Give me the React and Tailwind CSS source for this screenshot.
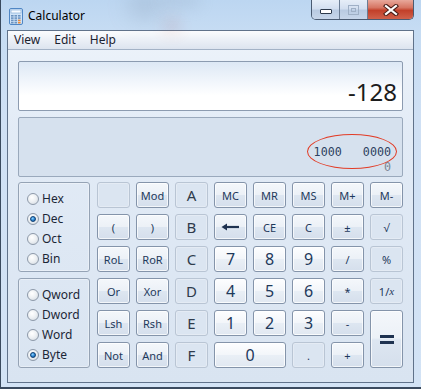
import React from "react";

const TXT = "text-[#1e395b]";

function Btn({ children, v = "op", className = "" }) {
  const base =
    "flex items-center justify-center rounded-[3px] border leading-none select-none " + TXT + " ";
  const styles = {
    op: "border-[#8494aa] bg-[linear-gradient(to_bottom,#f4f7fb_0%,#ecf1f7_48%,#dde6f1_52%,#d5dfec_100%)] shadow-[inset_0_0_0_1px_rgba(255,255,255,0.7)]",
    num: "border-[#8494aa] bg-[linear-gradient(to_bottom,#fdfeff_0%,#f3f6fa_48%,#e9eff6_52%,#e1e8f1_100%)] shadow-[inset_0_0_0_1px_rgba(255,255,255,0.8)]",
    dis: "border-[#b9c5d4] bg-[#dbe5f1] shadow-[inset_0_0_0_1px_rgba(255,255,255,0.25)]",
  };
  return <div className={base + styles[v] + " " + className}>{children}</div>;
}

function Radio({ label, checked }) {
  return (
    <div className="flex h-[20px] items-center">
      <div className="relative flex h-[12px] w-[12px] items-center justify-center rounded-full border border-[#8d99a9] bg-[radial-gradient(circle_at_40%_35%,#ffffff_0%,#eef1f4_45%,#cfd6de_100%)]">
        {checked && (
          <div className="h-[6px] w-[6px] rounded-full border border-[#0f3f73] bg-[radial-gradient(circle_at_40%_35%,#8fd3ff_0%,#2d8ad8_50%,#0f4f8f_100%)]" />
        )}
      </div>
      <span className="ml-[3px] text-[12px] leading-none text-[#1b2636]">{label}</span>
    </div>
  );
}

function Group({ items, checked }) {
  return (
    <div className="flex h-[90px] flex-col rounded-[3px] border border-[#95a3b5] pl-[8px] pt-[6px] shadow-[inset_0_0_0_1px_rgba(255,255,255,0.35)]">
      {items.map((it) => (
        <Radio key={it} label={it} checked={it === checked} />
      ))}
    </div>
  );
}

function CalcIcon() {
  return (
    <svg width="14" height="17" viewBox="0 0 14 17">
      <rect x="0.5" y="0.5" width="13" height="16" rx="1.5" fill="#cfe3f7" stroke="#4f86c4" />
      <rect x="2" y="2" width="10" height="3" fill="#f7fbff" stroke="#7aa3cf" strokeWidth="0.6" />
      {[0, 1, 2, 3].map((r) =>
        [0, 1, 2].map((c) => (
          <rect key={r + "-" + c} x={2 + c * 3.5} y={7 + r * 2.3} width="2.6" height="1.6" fill={c === 2 && r > 1 ? "#e98a3a" : "#6b93c0"} />
        ))
      )}
    </svg>
  );
}

function ArrowIcon() {
  return (
    <svg width="19" height="8" viewBox="0 0 19 8">
      <path d="M5 4 H18" stroke="#1e3250" strokeWidth="2.2" />
      <path d="M0.5 4 L6 0.5 L6 7.5 Z" fill="#1e3250" />
    </svg>
  );
}

export default function App() {
  const font = { fontFamily: '"Noto Sans", "Open Sans", Arial, sans-serif' };
  return (
    <div
      className="relative h-[389px] w-[421px] overflow-hidden bg-[linear-gradient(to_bottom,#bcd6f1_0%,#c6dcf3_8%,#cfe0f4_30%,#d3e3f5_100%)]"
      style={font}
    >
      {/* blurred desktop behind glass */}
      <div className="pointer-events-none absolute left-[130px] top-[-6px] h-[22px] w-[30px] rounded-full bg-[#7d8fa6] opacity-40 blur-md" />
      <div className="pointer-events-none absolute left-[160px] top-[-4px] h-[10px] w-[40px] rounded-full bg-[#8a9bb0] opacity-30 blur-sm" />
      <div className="pointer-events-none absolute left-[166px] top-[22px] h-[8px] w-[12px] rounded-full bg-[#b0504a] opacity-40 blur-sm" />
      <div className="pointer-events-none absolute left-[0px] top-[0px] h-[389px] w-[1px] bg-[#3a4a5e]" />
      <div className="pointer-events-none absolute bottom-[0px] left-[0px] h-[2px] w-[421px] bg-[#3a4a5e]" />

      {/* title bar */}
      <div className="relative flex h-[30px] items-center pl-[9px]">
        <div className="mt-[2px]">
          <CalcIcon />
        </div>
        <span className="ml-[5px] mt-[2px] text-[12px] text-black">Calculator</span>

        <div className="absolute right-[7px] top-[0px] flex h-[20px] overflow-hidden rounded-b-[5px] border border-t-0 border-[#4a5b72]">
          <div className="flex w-[28px] items-center justify-center border-r border-[#6b7d94] bg-[linear-gradient(to_bottom,#e6eef8_0%,#d3dff0_45%,#b9cbe2_55%,#c7d6ea_100%)]">
            <div className="mt-[4px] h-[5px] w-[12px] rounded-[1px] border border-[#2d3a4c] bg-white" />
          </div>
          <div className="flex w-[28px] items-center justify-center border-r border-[#6b7d94] bg-[linear-gradient(to_bottom,#e6eef8_0%,#d3dff0_45%,#b9cbe2_55%,#c7d6ea_100%)]">
            <div className="flex h-[10px] w-[11px] items-center justify-center border border-[#9fb0c6]">
              <div className="h-[4px] w-[5px] border border-[#9fb0c6]" />
            </div>
          </div>
          <div className="flex w-[45px] items-center justify-center bg-[linear-gradient(to_bottom,#e8a89b_0%,#d67563_40%,#c2402a_55%,#d0614b_100%)]">
            <svg width="16" height="12" viewBox="0 0 16 12">
              <path d="M3 2 L13 10 M13 2 L3 10" stroke="#4a1d17" strokeWidth="4.2" strokeLinecap="square" />
              <path d="M3 2 L13 10 M13 2 L3 10" stroke="#ffffff" strokeWidth="2.2" strokeLinecap="square" />
            </svg>
          </div>
        </div>
      </div>

      {/* client area */}
      <div className="ml-[7px] flex h-[353px] w-[407px] flex-col border border-[#60728a] bg-[linear-gradient(to_bottom,#edf3fa_0%,#e2ebf6_30%,#d9e4f1_100%)]">
        {/* menu */}
        <div className="flex h-[19px] items-center border-b border-[#a3b2c6] bg-[linear-gradient(to_bottom,#fbfcfe_0%,#eef2f8_40%,#dde4ef_100%)] pl-[6px] text-[12px] text-[#1b2230]">
          <span className="mr-[14px]">View</span>
          <span className="mr-[14px]">Edit</span>
          <span>Help</span>
        </div>

        <div className="flex flex-col px-[10px] pt-[11px]">
          {/* main display */}
          <div className="flex h-[50px] items-end justify-end rounded-[2px] border border-[#8c9bb0] bg-[linear-gradient(to_bottom,#dde8f5_0%,#f3f7fc_45%,#ffffff_70%)] pb-[6px] pr-[5px]">
            <span className="text-[24px] leading-none text-[#1c1c1c]">-128</span>
          </div>

          {/* binary display */}
          <div className="relative mt-[6px] flex h-[60px] flex-col items-end justify-end rounded-[2px] border border-[#9aa9bc] bg-[#d6e1ee] pb-[1px] pr-[11px]">
            <div
              className="whitespace-pre text-[11.7px] leading-[15px] text-[#2e4160]"
              style={{ fontFamily: '"DejaVu Sans Mono", "Liberation Mono", monospace' }}
            >
              {"1000   0000"}
            </div>
            <div
              className="text-[11.7px] leading-[15px] text-[#7a8594]"
              style={{ fontFamily: '"DejaVu Sans Mono", "Liberation Mono", monospace' }}
            >
              0
            </div>
            <div className="pointer-events-none absolute left-[288px] top-[16px] h-[35px] w-[90px] rounded-[50%] border-[1.5px] border-[#e23c26]" />
          </div>

          {/* keypad */}
          <div className="mt-[5px] flex gap-[7px]">
            <div className="flex w-[72px] flex-col gap-[6px]">
              <Group items={["Hex", "Dec", "Oct", "Bin"]} checked="Dec" />
              <Group items={["Qword", "Dword", "Word", "Byte"]} checked="Byte" />
            </div>
            <div className="grid grid-cols-[repeat(8,33px)] grid-rows-[repeat(6,26px)] gap-[6px] text-[11px]">
              {/* row 1 */}
              <Btn v="dis" />
              <Btn>Mod</Btn>
              <Btn v="dis" className="text-[15px] text-[#2f3b4c]">A</Btn>
              <Btn>MC</Btn>
              <Btn>MR</Btn>
              <Btn>MS</Btn>
              <Btn>M+</Btn>
              <Btn>M-</Btn>
              {/* row 2 */}
              <Btn>(</Btn>
              <Btn>)</Btn>
              <Btn v="dis" className="text-[15px] text-[#2f3b4c]">B</Btn>
              <Btn><ArrowIcon /></Btn>
              <Btn>CE</Btn>
              <Btn>C</Btn>
              <Btn>±</Btn>
              <Btn v="dis">√</Btn>
              {/* row 3 */}
              <Btn>RoL</Btn>
              <Btn>RoR</Btn>
              <Btn v="dis" className="text-[15px] text-[#2f3b4c]">C</Btn>
              <Btn v="num" className="text-[16px]">7</Btn>
              <Btn v="num" className="text-[16px]">8</Btn>
              <Btn v="num" className="text-[16px]">9</Btn>
              <Btn>/</Btn>
              <Btn v="dis">%</Btn>
              {/* row 4 */}
              <Btn>Or</Btn>
              <Btn>Xor</Btn>
              <Btn v="dis" className="text-[15px] text-[#2f3b4c]">D</Btn>
              <Btn v="num" className="text-[16px]">4</Btn>
              <Btn v="num" className="text-[16px]">5</Btn>
              <Btn v="num" className="text-[16px]">6</Btn>
              <Btn>*</Btn>
              <Btn v="dis">
                1/<span className="italic" style={{ fontFamily: '"Liberation Serif", serif' }}>x</span>
              </Btn>
              {/* row 5 */}
              <Btn>Lsh</Btn>
              <Btn>Rsh</Btn>
              <Btn v="dis" className="text-[15px] text-[#2f3b4c]">E</Btn>
              <Btn v="num" className="text-[16px]">1</Btn>
              <Btn v="num" className="text-[16px]">2</Btn>
              <Btn v="num" className="text-[16px]">3</Btn>
              <Btn>-</Btn>
              <Btn className="row-span-2 bg-[linear-gradient(to_bottom,#f4f7fb_0%,#ecf1f7_48%,#dde6f1_50%,#d5dfec_100%)]">
                <svg width="14" height="9" viewBox="0 0 14 9">
                  <rect x="0" y="0" width="14" height="3" fill="#1e3250" />
                  <rect x="0" y="6" width="14" height="3" fill="#1e3250" />
                </svg>
              </Btn>
              {/* row 6 */}
              <Btn>Not</Btn>
              <Btn>And</Btn>
              <Btn v="dis" className="text-[15px] text-[#2f3b4c]">F</Btn>
              <Btn v="num" className="col-span-2 text-[16px]">0</Btn>
              <Btn v="dis">.</Btn>
              <Btn>+</Btn>
            </div>
          </div>
        </div>
      </div>
    </div>
  );
}
